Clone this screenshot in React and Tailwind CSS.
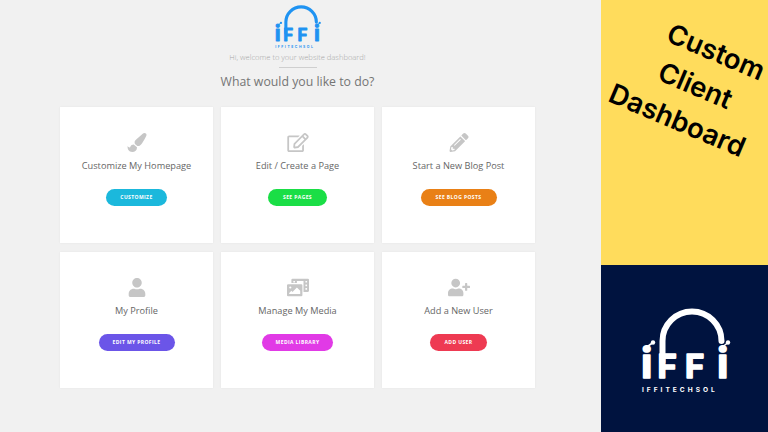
import { FaPaintBrush, FaRegEdit, FaPencilAlt, FaUser, FaPhotoVideo, FaUserPlus } from 'react-icons/fa';

const cards = [
  { title: 'Customize My Homepage', label: 'Customize', Icon: FaPaintBrush, button: 'w-[61px] bg-[#1bb8dc]' },
  { title: 'Edit / Create a Page', label: 'See Pages', Icon: FaRegEdit, button: 'w-[59px] bg-[#1ade46]' },
  { title: 'Start a New Blog Post', label: 'See Blog Posts', Icon: FaPencilAlt, button: 'w-[76px] bg-[#e98016]' },
  { title: 'My Profile', label: 'Edit My Profile', Icon: FaUser, button: 'w-[76px] bg-[#6b55e8]' },
  { title: 'Manage My Media', label: 'Media Library', Icon: FaPhotoVideo, button: 'w-[71px] bg-[#e13ae6]' },
  { title: 'Add a New User', label: 'Add User', Icon: FaUserPlus, button: 'w-[57px] bg-[#ee3a52]' },
];

const Logo = ({ color, className }) => (
  <svg viewBox="16 14 98 89" className={className} fill="none" stroke={color}>
    <path d="M42.5 72 V51 A29.5 29.5 0 0 1 101.5 51" strokeWidth="6" strokeLinecap="round" />
    <path d="M24 59 L33 52.5 M100 59 L108 52.5" strokeWidth="1.6" />
    <circle cx="33" cy="52.5" r="2.2" fill={color} stroke="none" />
    <circle cx="108" cy="52.5" r="2.2" fill={color} stroke="none" />
    <g fill={color} style={{ fontFamily: 'Inter, sans-serif', fontWeight: 700 }} strokeWidth="1.6" strokeLinejoin="round">
      <text x="21" y="87.5" fontSize="42">i</text>
      <text x="37.5" y="87.5" fontSize="33">F</text>
      <text x="65" y="87.5" fontSize="33">F</text>
      <text x="97" y="87.5" fontSize="42">i</text>
    </g>
    <text x="22" y="102" fontSize="6.6" letterSpacing="3" fill={color} stroke="none" style={{ fontFamily: 'Inter, sans-serif', fontWeight: 700 }}>
      IFFITECHSOL
    </text>
  </svg>
);

const Card = ({ title, label, Icon, button }) => (
  <div className="flex h-[136px] flex-col items-center bg-white pt-[26px] shadow-[0_0_2px_rgba(0,0,0,0.06)]">
    <Icon className="h-[19px] w-[22px] text-[#c6c6c6]" />
    <div className="mt-[6px] text-[9.2px] leading-[16px] text-[#666666]">{title}</div>
    <div className={`mt-[15px] flex h-[17px] items-center justify-center rounded-full text-[5px] font-bold uppercase tracking-[0.4px] text-white ${button}`}>
      {label}
    </div>
  </div>
);

export default function App() {
  return (
    <div className="flex h-[432px] w-[768px] overflow-hidden font-['Open_Sans',sans-serif]">
      <div className="w-[601px] bg-[#f1f1f1] pl-[60px]">
        <div className="flex w-[475px] flex-col items-center pt-[3px]">
          <Logo color="#1f93f2" className="h-[46px] w-[51px]" />
          <div className="mt-[2px] text-[7.6px] font-light leading-[12px] text-[#a8a8a8]">Hi, welcome to your website dashboard!</div>
          <div className="mt-[4px] h-px w-[38px] bg-[#cfcfcf]" />
          <div className="mt-[5px] text-[12.3px] leading-[18px] text-[#757575]">What would you like to do?</div>
          <div className="mt-[16px] grid w-full grid-cols-3 gap-x-[8px] gap-y-[9px]">
            {cards.map((card) => (
              <Card key={card.title} {...card} />
            ))}
          </div>
        </div>
      </div>
      <div className="flex w-[167px] flex-col">
        <div className="flex h-[265px] items-start justify-center bg-[#ffdc5c] pt-[26px]">
          <div className="ml-[16px] rotate-[23deg] text-center font-['Inter',sans-serif] text-[27.5px] font-semibold leading-[39px] text-black">
            <div className="pl-[18px]">Custom</div>
            <div className="pl-[6px]">Client</div>
            <div>Dashboard</div>
          </div>
        </div>
        <div className="flex flex-1 items-start justify-center bg-[#00133f] pt-[39px]">
          <Logo color="#ffffff" className="h-[89px] w-[98px]" />
        </div>
      </div>
    </div>
  );
}
